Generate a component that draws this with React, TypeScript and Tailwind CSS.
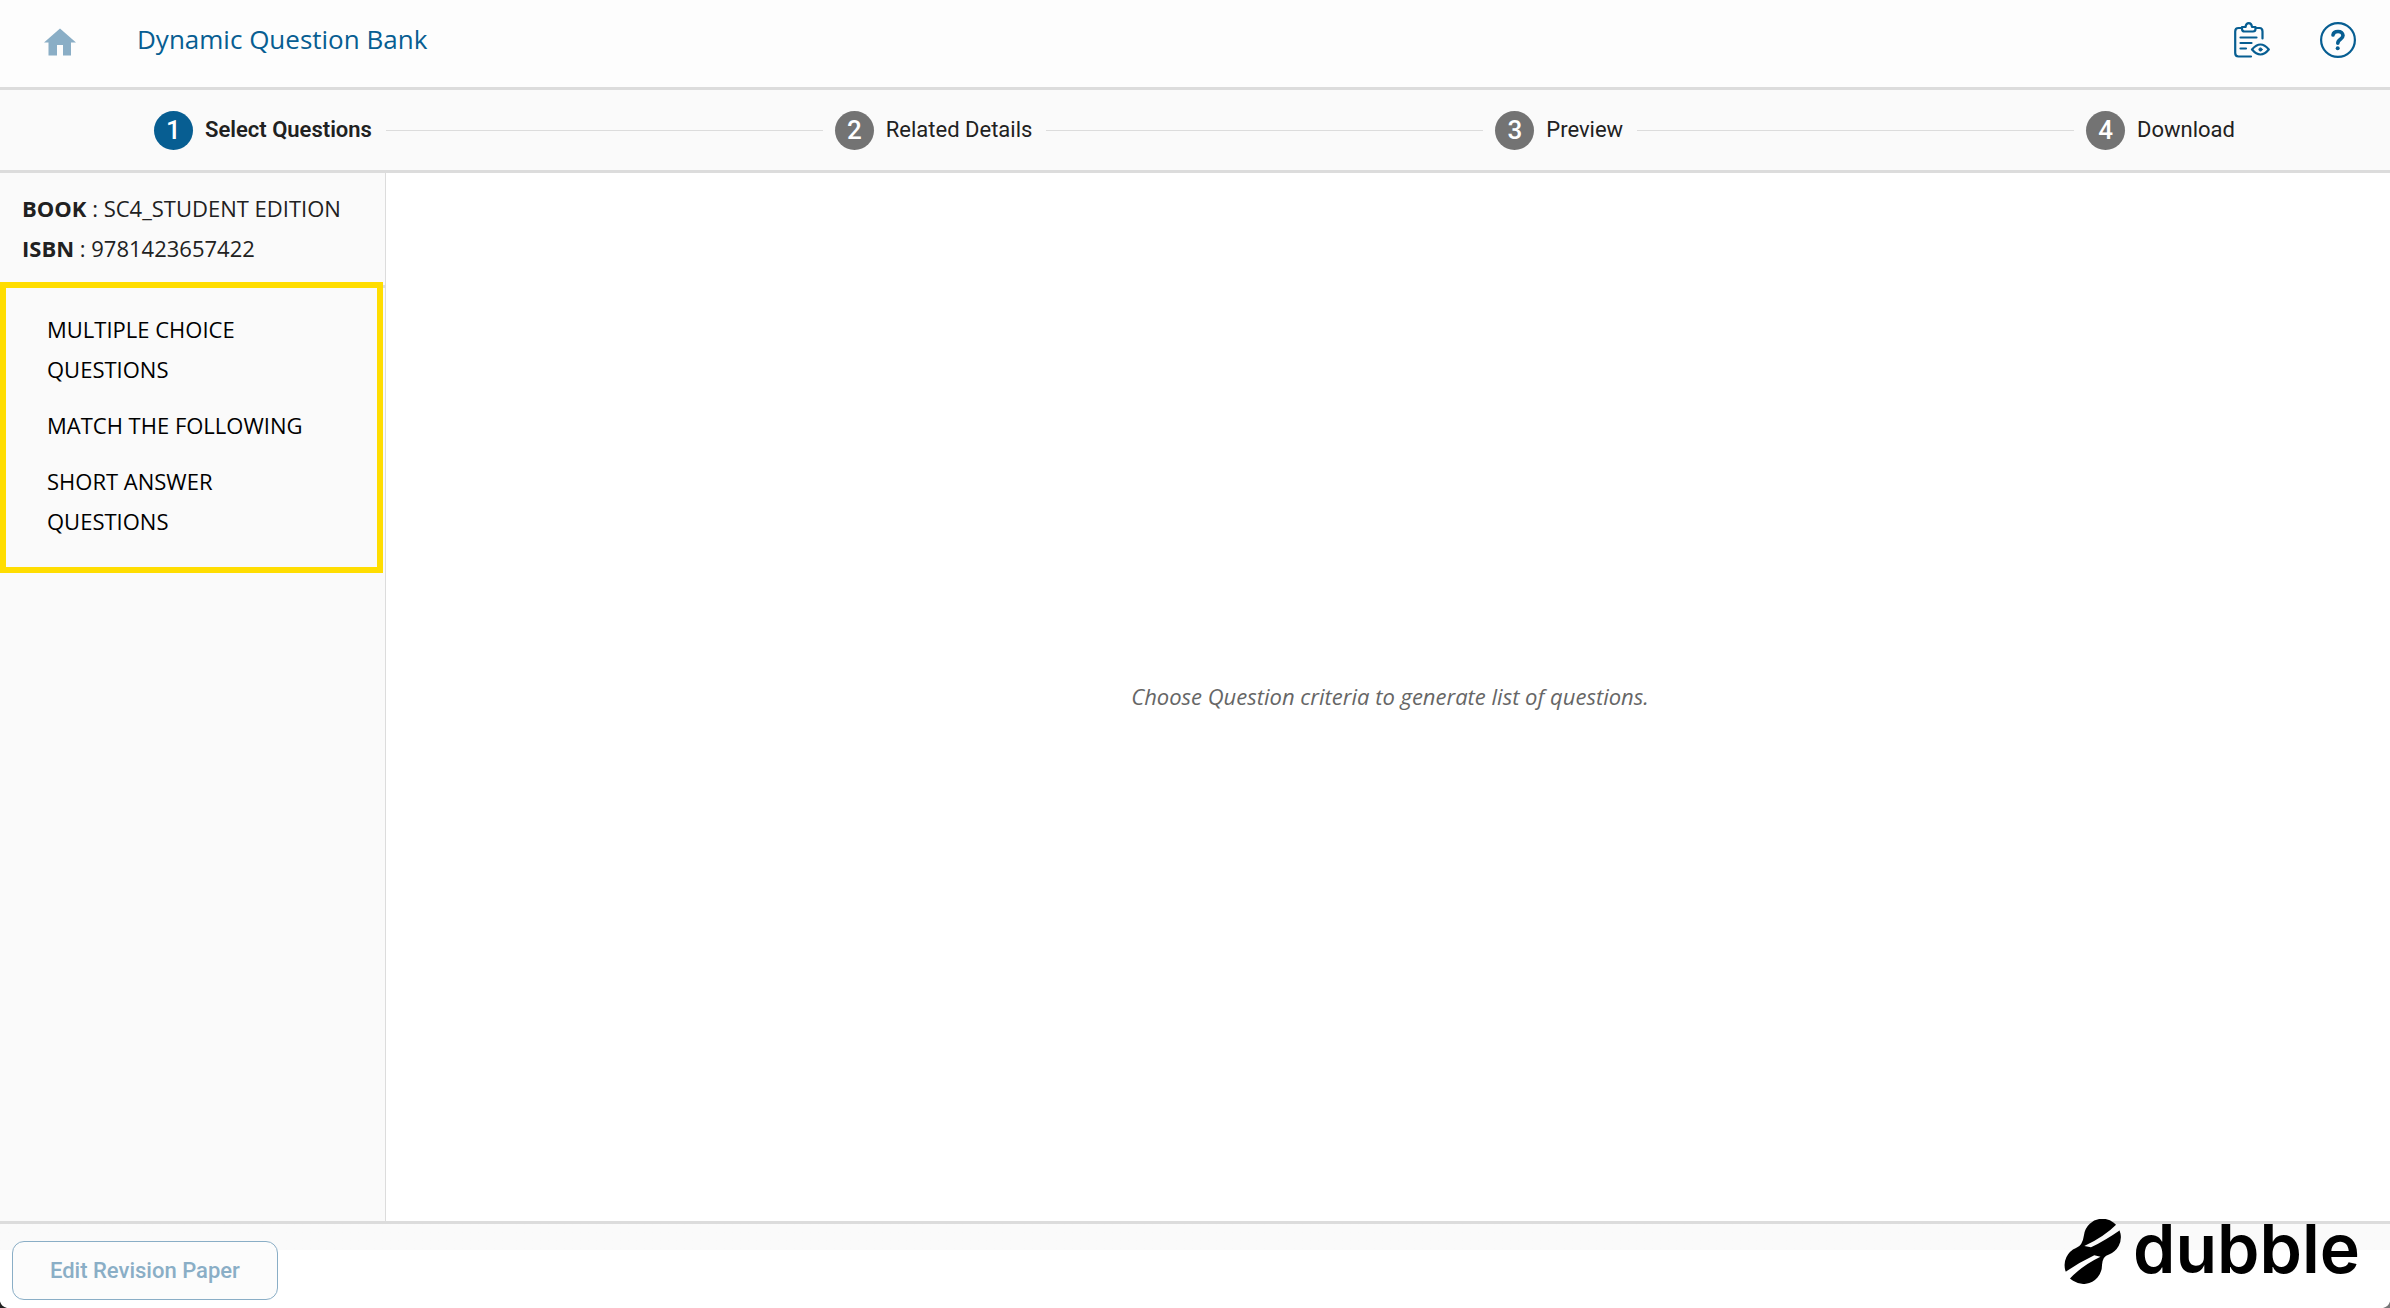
import React from "react";

const steps = ["Select Questions", "Related Details", "Preview", "Download"];
const questionTypes = [
  "MULTIPLE CHOICE QUESTIONS",
  "MATCH THE FOLLOWING",
  "SHORT ANSWER QUESTIONS",
];

function HomeIcon() {
  return (
    <svg viewBox="0 0 32 28" className="h-7 w-8" fill="#8aaec6" aria-hidden="true">
      <path d="M16 0.500L32 14.500H27V27.500H19V17H13V27.500H4.500V14.500H0Z" />
    </svg>
  );
}

function ReviewIcon() {
  return (
    <svg
      viewBox="0 0 36 36"
      className="size-9"
      fill="none"
      stroke="#075e92"
      strokeWidth="2.200"
      strokeLinecap="round"
      strokeLinejoin="round"
      aria-hidden="true"
    >
      <path d="M7.500 6H4.500Q1.200 6 1.200 9.500V31Q1.200 34.500 4.500 34.500H17" />
      <path d="M22.500 6H25.500Q28.500 6 28.500 9.500V16.500" />
      <path d="M8 5H11.500Q12 1.200 14.800 1.200T18 5H21.500V7Q21.500 9.500 19 9.500H10.500Q8 9.500 8 7Z" />
      <path d="M6.500 15.500H22.500M6.500 21H17.500M6.500 26.500H12" />
      <path d="M18 27.500Q26.500 17.500 34.800 27.500Q26.500 37.500 18 27.500Z" />
      <circle cx="26.500" cy="27.500" r="1.600" fill="#075e92" strokeWidth="1" />
    </svg>
  );
}

function HelpIcon() {
  return (
    <svg viewBox="0 0 36 36" className="size-9" fill="none" stroke="#075e92" aria-hidden="true">
      <circle cx="18" cy="18" r="16.900" strokeWidth="2.200" />
      <path
        d="M13 13Q13.500 9.500 18 9.500T23 13.500C23 17.500 17.800 17 17.800 21.300"
        strokeWidth="3.600"
        strokeLinecap="round"
      />
      <circle cx="17.700" cy="26.300" r="2" fill="#075e92" stroke="none" />
    </svg>
  );
}

function DubbleMark() {
  return (
    <svg viewBox="0 0 57 65" className="h-[65px] w-[57px]" aria-hidden="true">
      <mask id="dubble-cuts">
        <rect width="57" height="65" fill="#fff" />
        <path d="M20.300 27L27 28.300Q42 21 59 9L54 4Q40 18 20.300 27Z" fill="#000" />
        <path d="M36.500 37.700L30.300 36.300Q15 43.500 -1 54.500L3.500 62Q17 47 36.500 37.700Z" fill="#000" />
      </mask>
      <path
        mask="url(#dubble-cuts)"
        d="M20 16A18.500 18.500 0 1 1 45 35.500Q38.500 37 38 46A18.700 18.700 0 1 1 12 29Q18.500 27 20 16Z"
      />
    </svg>
  );
}

export default function App() {
  return (
    <div className="relative flex min-h-screen flex-col bg-white font-['Open_Sans',sans-serif] text-[#212121]">
      <header className="flex h-[90px] items-center justify-between border-b-3 border-[#dcdcdc] bg-[#fdfdfd] pr-[34px] pb-2 pl-11">
        <div className="flex items-center gap-[61px]">
          <a href="#home" aria-label="Home" className="pt-1">
            <HomeIcon />
          </a>
          <h1 className="pb-0.5 text-[26px] leading-10 text-[#075e92]">Dynamic Question Bank</h1>
        </div>
        <div className="flex items-center gap-[50px]">
          <button type="button" aria-label="Review paper">
            <ReviewIcon />
          </button>
          <button type="button" aria-label="Help">
            <HelpIcon />
          </button>
        </div>
      </header>

      <nav
        aria-label="Progress"
        className="h-[83px] border-b-3 border-[#dcdcdc] bg-[#fafafa] font-[Roboto,sans-serif]"
      >
        <ol className="flex h-full items-center pr-[155px] pl-[154px]">
          {steps.map((label, i) => (
            <React.Fragment key={label}>
              {i > 0 && <li aria-hidden="true" className="mr-3 ml-[14px] h-px flex-1 bg-[#dcdcdc]" />}
              <li
                aria-current={i === 0 ? "step" : undefined}
                className={
                  i === 0
                    ? "flex items-center gap-3 text-[22px] font-semibold"
                    : "flex items-center gap-3 text-[22px]"
                }
              >
                <span
                  className={
                    i === 0
                      ? "flex size-[39px] items-center justify-center rounded-full bg-[#075e92] text-[26px] font-medium text-white"
                      : "flex size-[39px] items-center justify-center rounded-full bg-[#737373] text-[26px] font-medium text-white"
                  }
                >
                  {i + 1}
                </span>
                <span className="pb-0.5">{label}</span>
              </li>
            </React.Fragment>
          ))}
        </ol>
      </nav>

      <div className="flex flex-1">
        <aside className="w-[386px] shrink-0 border-r border-[#dcdcdc] bg-[#fafafa]">
          <div className="px-[22px] pt-[15px] pb-[17px] text-[22px] leading-10">
            <p>
              <strong>BOOK</strong> : SC4_STUDENT EDITION
            </p>
            <p>
              <strong>ISBN</strong> : 9781423657422
            </p>
          </div>
          <div className="border-t-3 border-[#dcdcdc]">
            <ul className="-mt-1.5 mr-[2px] flex flex-col gap-4 border-6 border-[#ffdd00] pt-[21px] pr-16 pb-[26px] pl-[41px] text-[22px] leading-10 text-black">
              {questionTypes.map((q) => (
                <li key={q}>
                  <button type="button" className="block text-left">
                    {q}
                  </button>
                </li>
              ))}
            </ul>
          </div>
        </aside>
        <main className="flex flex-1 items-center justify-center pb-0.5 pl-1">
          <p className="text-[22px] text-[#666] italic">
            Choose Question criteria to generate list of questions.
          </p>
        </main>
      </div>

      <footer className="h-[87px] border-t-3 border-[#dcdcdc] bg-linear-to-b from-[#fafafa] from-[26px] to-white to-[26px] px-3 pt-[17px]">
        <button
          type="button"
          disabled
          className="h-[59px] rounded-xl border border-[#8aaec6] bg-[#fcfcfc] px-[37px] font-[Roboto,sans-serif] text-[22px] font-medium text-[#8aaec6]"
        >
          Edit Revision Paper
        </button>
      </footer>

      <div className="absolute right-[30px] bottom-6 flex items-center gap-3 text-black">
        <DubbleMark />
        <span className="pb-1.5 font-[Inter,sans-serif] text-[68px] leading-[60px] font-semibold">dubble</span>
      </div>

      {/* Rounded window corners */}
      <svg viewBox="0 0 8 8" className="absolute bottom-0 left-0 size-2" fill="#222" aria-hidden="true">
        <path d="M0 1.500Q1.500 6.500 7 8H0Z" />
      </svg>
      <svg viewBox="0 0 8 8" className="absolute right-0 bottom-0 size-2" fill="#777" aria-hidden="true">
        <path d="M8 1.500Q6.500 6.500 1 8H8Z" />
      </svg>
    </div>
  );
}
